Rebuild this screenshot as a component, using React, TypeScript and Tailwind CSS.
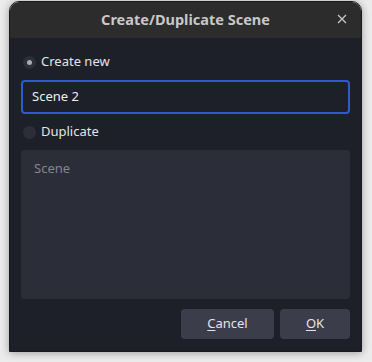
import { useState } from 'react';

export default function App() {
  const [mode, setMode] = useState<'create' | 'duplicate'>('create');
  const [name, setName] = useState('Scene 2');

  return (
    <div
      className="w-[372px] h-[362px] bg-[#ececec] pt-px pl-[9px]"
      style={{ fontFamily: '"Noto Sans", "Open Sans", sans-serif' }}
    >
      <div className="w-[353px] h-[351px] flex flex-col rounded-t-[10px] overflow-hidden shadow-[0_1px_8px_rgba(0,0,0,0.35)] border border-[#1a1a1a]">
        {/* title bar */}
        <div className="h-[36px] bg-[#2c2c2c] flex items-center justify-center relative shrink-0">
          <span className="text-[14.5px] font-bold text-[#c8c8c8]">Create/Duplicate Scene</span>
          <button className="absolute right-[12px] top-[10px] w-[14px] h-[14px] flex items-center justify-center text-[#c8c8c8]">
            <svg width="10" height="10" viewBox="0 0 10 10">
              <path d="M1 1L9 9M9 1L1 9" stroke="currentColor" strokeWidth="1.3" />
            </svg>
          </button>
        </div>

        {/* body */}
        <div className="flex-1 bg-[#1e2029] px-[11px] pt-[13px] flex flex-col">
          <label className="flex items-center gap-[5px] h-[22px] cursor-pointer" onClick={() => setMode('create')}>
            <span className="w-[13px] h-[13px] rounded-full bg-[#2c2e38] flex items-center justify-center ml-[2px]">
              {mode === 'create' && <span className="w-[5px] h-[5px] rounded-full bg-[#a9abb0]" />}
            </span>
            <span className="text-[13px] text-[#e3e4e8]">Create new</span>
          </label>

          <div className="mt-[7px] h-[34px] rounded-[4px] border-2 border-[#2f5ad0] bg-[#1e2029] flex items-center px-[9px]">
            <input
              autoFocus
              value={name}
              onChange={(e) => setName(e.target.value)}
              className="w-full bg-transparent outline-none text-[13px] text-[#eceef2] caret-[#eceef2]"
            />
          </div>

          <label className="mt-[7px] flex items-center gap-[5px] h-[22px] cursor-pointer" onClick={() => setMode('duplicate')}>
            <span className="w-[13px] h-[13px] rounded-full bg-[#2c2e38] flex items-center justify-center ml-[2px]">
              {mode === 'duplicate' && <span className="w-[5px] h-[5px] rounded-full bg-[#a9abb0]" />}
            </span>
            <span className="text-[13px] text-[#e3e4e8]">Duplicate</span>
          </label>

          <div className="mt-[7px] h-[149px] rounded-[4px] bg-[#2b2d38] px-[13px] pt-[5px]">
            <span className="text-[13px] text-[#84868e]">Scene</span>
          </div>

          <div className="mt-[10px] flex justify-end gap-[6px]">
            <button className="w-[93px] h-[30px] rounded-[4px] bg-[#3b3e4a] text-[13px] text-[#e3e4e8]">
              <span className="underline underline-offset-2">C</span>ancel
            </button>
            <button className="w-[70px] h-[30px] rounded-[4px] bg-[#3b3e4a] text-[13px] text-[#e3e4e8]">
              <span className="underline underline-offset-2">O</span>K
            </button>
          </div>
        </div>
      </div>
    </div>
  );
}
